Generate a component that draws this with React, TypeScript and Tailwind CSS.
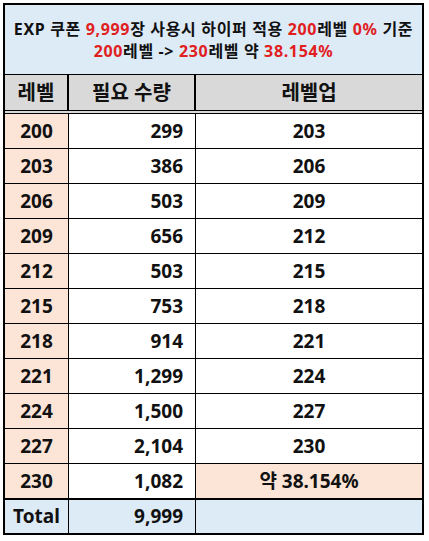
const rows: [string, string, string][] = [
  ["200", "299", "203"],
  ["203", "386", "206"],
  ["206", "503", "209"],
  ["209", "656", "212"],
  ["212", "503", "215"],
  ["215", "753", "218"],
  ["218", "914", "221"],
  ["221", "1,299", "224"],
  ["224", "1,500", "227"],
  ["227", "2,104", "230"],
];

function Red({ children }: { children: React.ReactNode }) {
  return <span className="text-[#e0201f]">{children}</span>;
}

export default function App() {
  return (
    <div
      className="w-[429px] h-[541px] bg-white pt-[3px] pl-[3px] text-[#111]"
      style={{ fontFamily: '"Noto Sans", "Noto Sans CJK KR", sans-serif' }}
    >
      <div className="w-[421px] border-2 border-black">
        <div className="h-[70px] bg-[#ddebf7] border-b border-black flex flex-col items-center justify-center pt-[1px] text-[16px] font-bold leading-[22px] tracking-[0.65px] whitespace-nowrap">
          <div>
            EXP 쿠폰 <Red>9,999</Red>장 사용시 하이퍼 적용 <Red>200</Red>레벨 <Red>0%</Red> 기준
          </div>
          <div>
            <Red>200</Red>레벨 -&gt; <Red>230</Red>레벨 약 <Red>38.154%</Red>
          </div>
        </div>

        <div className="grid grid-cols-[64px_127px_1fr] h-[39px] bg-[#d9d9d9] border-b-4 border-double border-black text-[20px] font-bold">
          <div className="border-r-2 border-black flex items-center justify-center">레벨</div>
          <div className="border-r-2 border-black flex items-center justify-center">필요 수량</div>
          <div className="flex items-center justify-center">레벨업</div>
        </div>

        {rows.map(([lv, need, up]) => (
          <div
            key={lv}
            className="grid grid-cols-[64px_127px_1fr] h-[35px] border-b border-black text-[19px] font-bold"
          >
            <div className="bg-[#fce4d6] border-r border-black flex items-center justify-center">{lv}</div>
            <div className="border-r border-black flex items-center justify-end pr-[12px]">{need}</div>
            <div className="flex items-center justify-center">{up}</div>
          </div>
        ))}

        <div className="grid grid-cols-[64px_127px_1fr] h-[36px] border-b-2 border-black text-[19px] font-bold">
          <div className="bg-[#fce4d6] border-r border-black flex items-center justify-center">230</div>
          <div className="border-r border-black flex items-center justify-end pr-[12px]">1,082</div>
          <div className="bg-[#fce4d6] flex items-center justify-center">약 38.154%</div>
        </div>

        <div className="grid grid-cols-[64px_127px_1fr] h-[33px] bg-[#ddebf7] text-[19px] font-bold">
          <div className="border-r border-black flex items-center justify-center">Total</div>
          <div className="border-r border-black flex items-center justify-end pr-[12px]">9,999</div>
          <div />
        </div>
      </div>
    </div>
  );
}
